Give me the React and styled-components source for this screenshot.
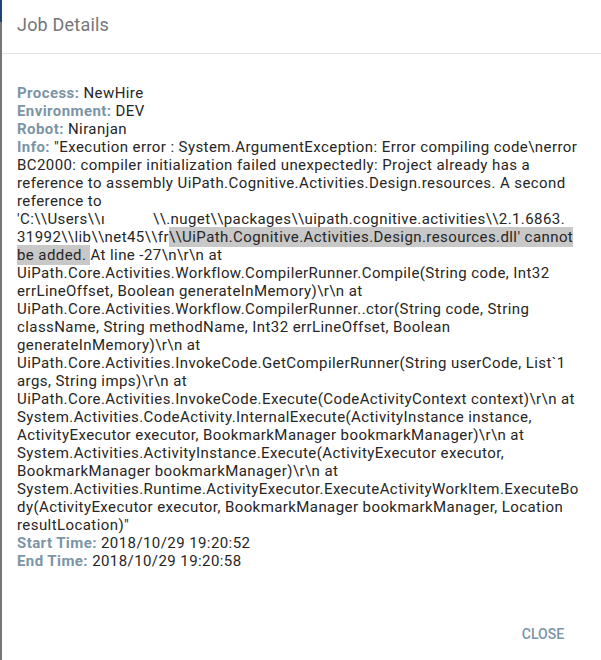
import React from "react";
import styled, { createGlobalStyle } from "styled-components";

const GlobalStyle = createGlobalStyle`
  html, body {
    margin: 0;
    padding: 0;
    background: #ffffff;
  }
  body {
    font-family: Roboto, "Noto Sans", "Liberation Sans", sans-serif;
  }
`;

const Screen = styled.div`
  display: flex;
  height: 660px;
  overflow: hidden;
`;

// sliver of the page behind the modal
const Backdrop = styled.div`
  width: 2px;
  flex-shrink: 0;
  background: linear-gradient(#1d4677 0 22px, #767676 22px);
`;

const Dialog = styled.div`
  flex: 1;
  min-width: 0;
  display: flex;
  flex-direction: column;
  background: #ffffff;
`;

const Header = styled.h2`
  margin: 0;
  height: 54px;
  box-sizing: border-box;
  padding: 0 15px 4px;
  display: flex;
  align-items: center;
  font-size: 18px;
  font-weight: 400;
  letter-spacing: 0.2px;
  color: #767676;
  border-bottom: 1px solid #e3e3e3;
`;

const Body = styled.div`
  flex: 1;
  padding: 30px 15px 0;
  font-size: 15px;
  letter-spacing: 0.42px;
  line-height: 18px;
  color: #262626;
  white-space: nowrap;
`;

const Field = styled.div``;

const Label = styled.span`
  font-weight: 700;
  color: #7b95a6;
`;

const Selected = styled.span`
  background: #c8c8c8;
  padding: 1px 0;
`;

const Redacted = styled.span`
  display: inline-block;
  width: 48px;
`;

const Footer = styled.div`
  display: flex;
  justify-content: flex-end;
  padding: 8px 26px 8px 8px;
`;

const TextButton = styled.button`
  min-width: 64px;
  height: 36px;
  padding: 0 8px;
  border: none;
  background: transparent;
  font-family: Roboto, "Noto Sans", sans-serif;
  font-size: 14px;
  font-weight: 500;
  text-transform: uppercase;
  color: #7b95a6;
  cursor: pointer;
`;

const job = {
  process: "NewHire",
  environment: "DEV",
  robot: "Niranjan",
  start: "2018/10/29 19:20:52",
  end: "2018/10/29 19:20:58",
};

const infoTail = [
  String.raw`UiPath.Core.Activities.Workflow.CompilerRunner.Compile(String code, Int32`,
  String.raw`errLineOffset, Boolean generateInMemory)\r\n at`,
  String.raw`UiPath.Core.Activities.Workflow.CompilerRunner..ctor(String code, String`,
  String.raw`className, String methodName, Int32 errLineOffset, Boolean`,
  String.raw`generateInMemory)\r\n at`,
  String.raw`UiPath.Core.Activities.InvokeCode.GetCompilerRunner(String userCode, List` + "`1",
  String.raw`args, String imps)\r\n at`,
  String.raw`UiPath.Core.Activities.InvokeCode.Execute(CodeActivityContext context)\r\n at`,
  String.raw`System.Activities.CodeActivity.InternalExecute(ActivityInstance instance,`,
  String.raw`ActivityExecutor executor, BookmarkManager bookmarkManager)\r\n at`,
  String.raw`System.Activities.ActivityInstance.Execute(ActivityExecutor executor,`,
  String.raw`BookmarkManager bookmarkManager)\r\n at`,
  String.raw`System.Activities.Runtime.ActivityExecutor.ExecuteActivityWorkItem.ExecuteBo`,
  String.raw`dy(ActivityExecutor executor, BookmarkManager bookmarkManager, Location`,
  String.raw`resultLocation)"`,
];

function App() {
  return (
    <>
      <GlobalStyle />
      <Screen>
        <Backdrop />
        <Dialog>
          <Header>Job Details</Header>
          <Body>
            <Field>
              <Label>Process:</Label> {job.process}
            </Field>
            <Field>
              <Label>Environment:</Label> {job.environment}
            </Field>
            <Field>
              <Label>Robot:</Label> {job.robot}
            </Field>
            <Field>
              <Label>Info:</Label> "Execution error : System.ArgumentException: Error compiling code{String.raw`\nerror`}
              <br />
              BC2000: compiler initialization failed unexpectedly: Project already has a
              <br />
              reference to assembly UiPath.Cognitive.Activities.Design.resources. A second
              <br />
              reference to
              <br />
              {String.raw`'C:\\Users\\ı`}
              <Redacted />
              {String.raw`\\.nuget\\packages\\uipath.cognitive.activities\\2.1.6863.`}
              <br />
              {String.raw`31992\\lib\\net45\\fr`}
              <Selected>{String.raw`\\UiPath.Cognitive.Activities.Design.resources.dll' cannot `}</Selected>
              <br />
              <Selected>be added. </Selected>
              {String.raw`At line -27\n\r\n at`}
              {infoTail.map((line, i) => (
                <React.Fragment key={i}>
                  <br />
                  {line}
                </React.Fragment>
              ))}
            </Field>
            <Field>
              <Label>Start Time:</Label> {job.start}
            </Field>
            <Field>
              <Label>End Time:</Label> {job.end}
            </Field>
          </Body>
          <Footer>
            <TextButton>Close</TextButton>
          </Footer>
        </Dialog>
      </Screen>
    </>
  );
}

export default App;
